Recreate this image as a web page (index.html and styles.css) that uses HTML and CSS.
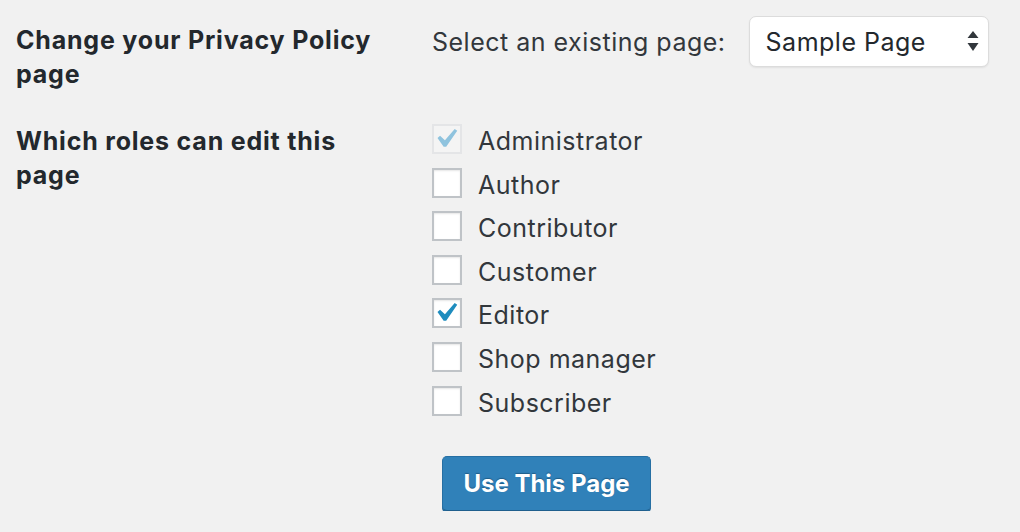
FILE: index.html
```html
<!DOCTYPE html>
<html lang="en">
<head>
<meta charset="utf-8">
<title>Privacy Policy page</title>
<link rel="stylesheet" href="styles.css">
</head>
<body>
<div class="form">
  <div class="row row-page">
    <div class="th">Change your Privacy Policy page</div>
    <div class="td td-page">
      <span class="select-label">Select an existing page:</span>
      <div class="select">
        <span>Sample Page</span>
        <svg class="arrows" width="12" height="21" viewBox="0 0 12 21"><path d="M6 0 L11.5 7 H0.5 Z M0.5 12 H11.5 L6 20 Z" fill="#32373c"/></svg>
      </div>
    </div>
  </div>
  <div class="row row-roles">
    <div class="th">Which roles can edit this page</div>
    <div class="td">
      <ul class="roles">
        <li class="role"><span class="box box-disabled"><svg class="check" width="29" height="29" viewBox="2.89 2.26 15.26 15.26"><path d="M14.83 4.89l1.34.94-5.81 8.38H9.02L5.78 9.67l1.34-1.25 2.57 2.4z" fill="#8fc3de"/></svg></span>Administrator</li>
        <li class="role"><span class="box"></span>Author</li>
        <li class="role"><span class="box"></span>Contributor</li>
        <li class="role"><span class="box"></span>Customer</li>
        <li class="role"><span class="box"><svg class="check" width="29" height="29" viewBox="2.89 2.26 15.26 15.26"><path d="M14.83 4.89l1.34.94-5.81 8.38H9.02L5.78 9.67l1.34-1.25 2.57 2.4z" fill="#1e8cbe"/></svg></span>Editor</li>
        <li class="role"><span class="box"></span>Shop manager</li>
        <li class="role"><span class="box"></span>Subscriber</li>
      </ul>
      <button class="button" type="button">Use This Page</button>
    </div>
  </div>
</div>
</body>
</html>
```
FILE: styles.css
```css
html, body {
  margin: 0;
  padding: 0;
  background: #f1f1f1;
}
body {
  font-family: Inter, "Noto Sans", "Liberation Sans", sans-serif;
  color: #32373c;
  font-size: 25px;
  letter-spacing: 0.5px;
  line-height: 34px;
}
.form {
  padding: 16px 0 0 16px;
}
.row {
  display: grid;
  grid-template-columns: 416px 1fr;
}
.th {
  font-weight: 700;
  color: #23282d;
  letter-spacing: 0.8px;
  width: 385px;
  padding-top: 7px;
}
.td-page {
  display: flex;
  align-items: center;
  height: 51px;
}
.select-label {
  margin-right: 23px;
}
.select {
  box-sizing: border-box;
  width: 240px;
  height: 51px;
  display: flex;
  align-items: center;
  justify-content: space-between;
  padding: 0 9px 0 16px;
  background: #fff;
  border: 1px solid #dcdcdc;
  border-radius: 7px;
  box-shadow: 0 1px 2px rgba(0, 0, 0, 0.07);
  color: #23282d;
}
.row-roles {
  margin-top: 33px;
}
.row-roles .th {
  padding-top: 0;
}
.roles {
  list-style: none;
  margin: 0;
  padding: 0;
  display: flex;
  flex-direction: column;
  gap: 9.6px;
}
.role {
  display: flex;
  align-items: flex-start;
  height: 34px;
}
.box {
  box-sizing: border-box;
  width: 30px;
  height: 30px;
  margin-right: 16px;
  background: #fff;
  border: 2px solid #bfc3c7;
  box-shadow: inset 0 1px 2px rgba(0, 0, 0, 0.1);
  position: relative;
  flex: none;
}
.box-disabled {
  background: #f4f4f4;
  border-color: #e4e5e7;
  box-shadow: none;
}
.check {
  position: absolute;
  left: -2px;
  top: -2px;
}
.button {
  display: block;
  margin: 36px 0 0 10px;
  box-sizing: border-box;
  width: 209px;
  height: 55px;
  padding: 0;
  font-family: inherit;
  font-size: 24px;
  letter-spacing: 0;
  font-weight: 700;
  color: #fff;
  background: #3081b9;
  border: 1px solid #266fa3;
  border-bottom-color: #1f5f8d;
  border-radius: 5px;
  box-shadow: 0 2px 0 #276b9b;
  text-shadow: 0 -1px 1px #215e89;
  cursor: pointer;
}
```
